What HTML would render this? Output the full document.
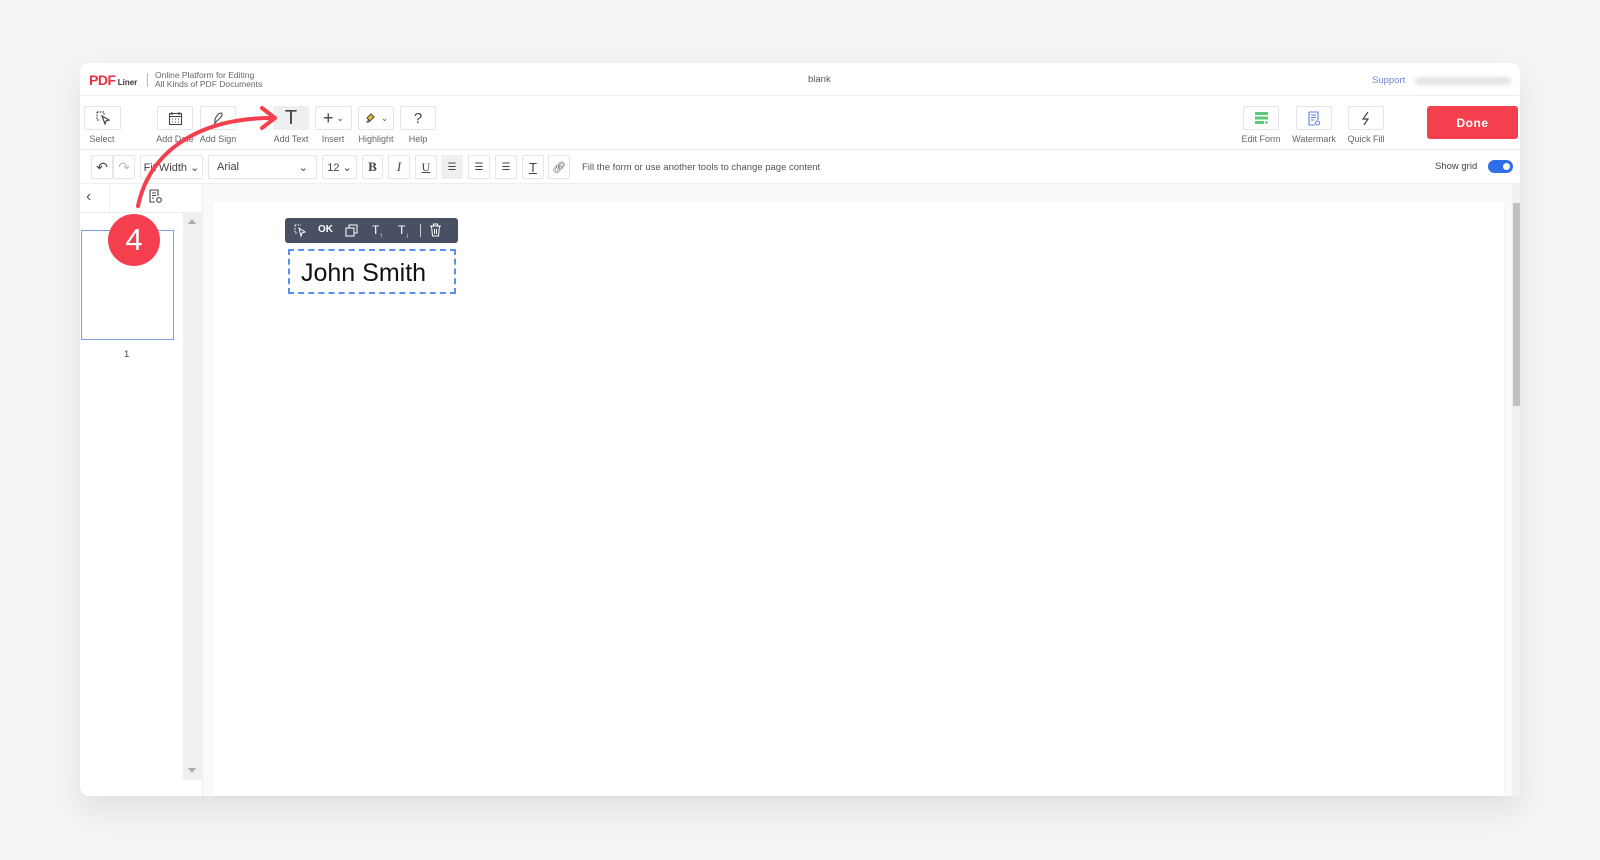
<!DOCTYPE html>
<html><head><meta charset="utf-8"><style>
*{box-sizing:border-box;margin:0;padding:0}
body{width:1600px;height:860px;background:#f3f4f6;font-family:"Liberation Sans",sans-serif;position:relative;overflow:hidden}
.a{position:absolute}
.card{left:80px;top:63px;width:1440px;height:733px;background:#fff;border-radius:9px;box-shadow:0 14px 30px rgba(0,0,0,.08);overflow:hidden}
.btn{position:absolute;height:24px;border:1px solid #e3e5ea;border-radius:2px;background:#fff;display:flex;align-items:center;justify-content:center;color:#555}
.lbl{position:absolute;font-size:9px;color:#666;text-align:center;width:60px}
.fb{position:absolute;top:155px;height:24px;border:1px solid #e3e5ea;border-radius:2px;background:#fff;display:flex;align-items:center;justify-content:center;font-size:11px;color:#444}
</style></head><body>
<div class="a card"></div>
<!-- header -->
<div class="a" style="left:89px;top:72px;font-weight:bold;font-size:14px;color:#e8303f;letter-spacing:-0.5px">PDF<span style="font-size:8px;color:#333;letter-spacing:0"> Liner</span></div>
<div class="a" style="left:147px;top:73px;width:1px;height:14px;background:#bbb"></div>
<div class="a" style="left:155px;top:71px;font-size:8.5px;line-height:8.5px;color:#666">Online Platform for Editing<br>All Kinds of PDF Documents</div>
<div class="a" style="left:808px;top:74px;font-size:9.5px;color:#555">blank</div>
<div class="a" style="left:1372px;top:75px;font-size:9.5px;color:#6c86e0">Support</div>
<div class="a" style="left:1415px;top:77px;width:96px;height:8px;background:#e4e4e8;border-radius:4px;filter:blur(2px)"></div>
<div class="a" style="left:80px;top:95px;width:1440px;height:1px;background:#eceef2"></div>
<!-- tool row -->
<div class="btn" style="left:84px;top:106px;width:37px"><svg width="16" height="16" viewBox="0 0 16 16" fill="none" stroke="#444" stroke-width="1.2"><path d="M2 2h7v3M2 2v8h3" stroke-dasharray="1.5 1.2"/><path d="M7 6l7 4-3 1-1 3z"/></svg></div>
<div class="lbl" style="left:72px;top:134px">Select</div>
<div class="btn" style="left:157px;top:106px;width:36px"><svg width="15" height="15" viewBox="0 0 15 15" fill="none" stroke="#444" stroke-width="1.1"><rect x="1.5" y="2.5" width="12" height="11"/><path d="M1.5 5.5h12M4 1v3M11 1v3"/><path d="M4 8h1M7 8h1M10 8h1M4 11h1M7 11h1M10 11h1"/></svg></div>
<div class="lbl" style="left:145px;top:134px">Add Date</div>
<div class="btn" style="left:200px;top:106px;width:36px"><svg width="15" height="15" viewBox="0 0 15 15" fill="none" stroke="#444" stroke-width="1.1"><path d="M4 11c-1-3 3-9 6-9 2 0 1 3-1 5l-4 4zM3 13l2-2"/></svg></div>
<div class="lbl" style="left:188px;top:134px">Add Sign</div>
<div class="btn" style="left:273px;top:106px;width:36px;background:#eeeff1;border-color:#eeeff1;font-size:20px;color:#444">T</div>
<div class="lbl" style="left:261px;top:134px">Add Text</div>
<div class="btn" style="left:315px;top:106px;width:37px;font-size:18px;color:#444">+<span style="font-size:9px;margin-left:3px">⌄</span></div>
<div class="lbl" style="left:303px;top:134px">Insert</div>
<div class="btn" style="left:358px;top:106px;width:36px"><svg width="14" height="14" viewBox="0 0 14 14"><path d="M3 7l4-4 3 3-4 4z" fill="#e3c52a" stroke="#444"/><path d="M2 12l2-3 2 2z" fill="#444"/></svg><span style="font-size:9px;margin-left:3px">⌄</span></div>
<div class="lbl" style="left:346px;top:134px">Highlight</div>
<div class="btn" style="left:400px;top:106px;width:36px;font-size:15px;color:#444">?</div>
<div class="lbl" style="left:388px;top:134px">Help</div>
<div class="btn" style="left:1243px;top:106px;width:36px"><svg width="15" height="14" viewBox="0 0 15 14" fill="#5cc97a"><rect x="1" y="1" width="13" height="3"/><rect x="1" y="5.5" width="13" height="3"/><rect x="1" y="10" width="9" height="3"/><path d="M11 11.5h3M12.5 10v3" stroke="#5cc97a"/></svg></div>
<div class="lbl" style="left:1231px;top:134px">Edit Form</div>
<div class="btn" style="left:1296px;top:106px;width:36px"><svg width="14" height="15" viewBox="0 0 14 15" fill="none" stroke="#5b7fe6" stroke-width="1.1"><path d="M2 1h9v8M2 1v13h6"/><path d="M4 4h5M4 6.5h5M4 9h3"/><circle cx="10.5" cy="12" r="2"/></svg></div>
<div class="lbl" style="left:1284px;top:134px">Watermark</div>
<div class="btn" style="left:1348px;top:106px;width:36px"><svg width="12" height="15" viewBox="0 0 12 15" fill="none" stroke="#444" stroke-width="1.2"><path d="M8 1L3 8h5l-4 6"/></svg></div>
<div class="lbl" style="left:1336px;top:134px">Quick Fill</div>
<div class="a" style="left:1427px;top:106px;width:91px;height:33px;background:#f43f4e;border-radius:3px;color:#fff;font-weight:bold;font-size:12px;display:flex;align-items:center;justify-content:center;letter-spacing:.5px">Done</div>
<div class="a" style="left:80px;top:149px;width:1440px;height:1px;background:#eceef2"></div>
<!-- format row -->
<div class="fb" style="left:91px;width:22px;font-size:14px">↶</div>
<div class="fb" style="left:113px;width:22px;font-size:14px;color:#bbb">↷</div>
<div class="fb" style="left:140px;width:63px">Fit Width ⌄</div>
<div class="fb" style="left:208px;width:109px;justify-content:space-between;padding:0 8px"><span>Arial</span><span>⌄</span></div>
<div class="fb" style="left:322px;width:35px">12 ⌄</div>
<div class="fb" style="left:362px;width:21px;font-family:'Liberation Serif',serif;font-weight:bold;font-size:13px">B</div>
<div class="fb" style="left:388px;width:22px;font-family:'Liberation Serif',serif;font-style:italic;font-size:13px">I</div>
<div class="fb" style="left:415px;width:22px;font-family:'Liberation Serif',serif;text-decoration:underline;font-size:12px">U</div>
<div class="fb" style="left:441px;width:22px;background:#eeeff1;border-color:#eeeff1;font-size:10px">☰</div>
<div class="fb" style="left:468px;width:22px;font-size:10px">☰</div>
<div class="fb" style="left:495px;width:22px;font-size:10px">☰</div>
<div class="fb" style="left:522px;width:22px;font-size:13px;text-decoration:underline">T</div>
<div class="fb" style="left:548px;width:22px;font-size:11px">🔗︎</div>
<div class="a" style="left:582px;top:162px;font-size:9.5px;color:#555">Fill the form or use another tools to change page content</div>
<div class="a" style="left:1435px;top:161px;font-size:9.5px;color:#444">Show grid</div>
<div class="a" style="left:1488px;top:160px;width:25px;height:13px;background:#2f6fe8;border-radius:7px"><div class="a" style="right:3px;top:3px;width:7px;height:7px;border-radius:50%;background:#fff"></div></div>
<div class="a" style="left:80px;top:183px;width:1440px;height:1px;background:#eceef2"></div>
<!-- sidebar -->
<div class="a" style="left:86px;top:188px;font-size:16px;color:#555">‹</div>
<div class="a" style="left:109px;top:184px;width:1px;height:28px;background:#eceef2"></div>
<div class="a" style="left:148px;top:189px"><svg width="15" height="15" viewBox="0 0 15 15" fill="none" stroke="#444" stroke-width="1.1"><path d="M2 1h8v6M2 1v12h5M4 4h4M4 6.5h4M4 9h2"/><circle cx="11" cy="11" r="2.3"/></svg></div>
<div class="a" style="left:80px;top:212px;width:123px;height:1px;background:#eceef2"></div>
<div class="a" style="left:183px;top:212px;width:19px;height:568px;background:#f0f0f0"></div>
<div class="a" style="left:188px;top:219px;width:0;height:0;border:4px solid transparent;border-bottom:5px solid #aaa;border-top:0"></div>
<div class="a" style="left:188px;top:768px;width:0;height:0;border:4px solid transparent;border-top:5px solid #aaa;border-bottom:0"></div>
<div class="a" style="left:202px;top:183px;width:1px;height:613px;background:#eceef2"></div>
<div class="a" style="left:81px;top:230px;width:93px;height:110px;border:1.5px solid #79a0ef"></div>
<div class="a" style="left:124px;top:349px;font-size:9.5px;color:#444">1</div>
<!-- canvas -->
<div class="a" style="left:203px;top:184px;width:1309px;height:612px;background:#fafafa"></div>
<div class="a" style="left:213px;top:202px;width:1291px;height:594px;background:#fff;box-shadow:0 0 3px rgba(0,0,0,.05)"></div>
<div class="a" style="left:1512px;top:184px;width:8px;height:612px;background:#f1f1f1"></div>
<div class="a" style="left:1513px;top:203px;width:7px;height:203px;background:#c1c1c1"></div>
<!-- floating toolbar -->
<div class="a" style="left:285px;top:218px;width:173px;height:25px;background:#4a5064;border-radius:3px;color:#fff;font-size:10px;font-weight:bold">
<svg class="a" style="left:8px;top:5px" width="15" height="15" viewBox="0 0 15 15" fill="none" stroke="#fff" stroke-width="1"><path d="M2 2h6M2 2v8h3" stroke-dasharray="1.5 1.2"/><path d="M6 5l6 4-3 1-1 3z"/></svg>
<span class="a" style="left:33px;top:6px">OK</span>
<svg class="a" style="left:60px;top:6px" width="13" height="13" viewBox="0 0 13 13" fill="none" stroke="#fff"><rect x="1" y="4" width="8" height="8"/><path d="M4 4V1h8v8H9"/></svg>
<span class="a" style="left:87px;top:5px;font-size:12px;font-weight:normal">T<sub style="font-size:7px">↑</sub></span>
<span class="a" style="left:113px;top:5px;font-size:12px;font-weight:normal">T<sub style="font-size:7px">↓</sub></span>
<div class="a" style="left:135px;top:6px;width:1px;height:13px;background:#ccc"></div>
<svg class="a" style="left:144px;top:5px" width="13" height="14" viewBox="0 0 13 14" fill="none" stroke="#fff"><path d="M1 3h11M4.5 3V1h4v2M2.5 3l1 10h6l1-10M5.5 6v5M7.5 6v5"/></svg>
</div>
<div class="a" style="left:288px;top:249px;width:168px;height:45px;border:2px dashed #5b8ff0"></div>
<div class="a" style="left:301px;top:259px;font-size:25px;color:#111">John Smith</div>
<!-- annotation -->
<svg class="a" style="left:0;top:0" width="1600" height="860"><path d="M138 206 C150 150 200 118 272 118" fill="none" stroke="#f43f4e" stroke-width="4" stroke-linecap="round"/><path d="M262 108 L275 118 L262 128" fill="none" stroke="#f43f4e" stroke-width="4" stroke-linecap="round" stroke-linejoin="round"/></svg>
<div class="a" style="left:108px;top:214px;width:52px;height:52px;border-radius:50%;background:#f43f4e;color:#fff;font-size:31px;display:flex;align-items:center;justify-content:center">4</div>
</body></html>
